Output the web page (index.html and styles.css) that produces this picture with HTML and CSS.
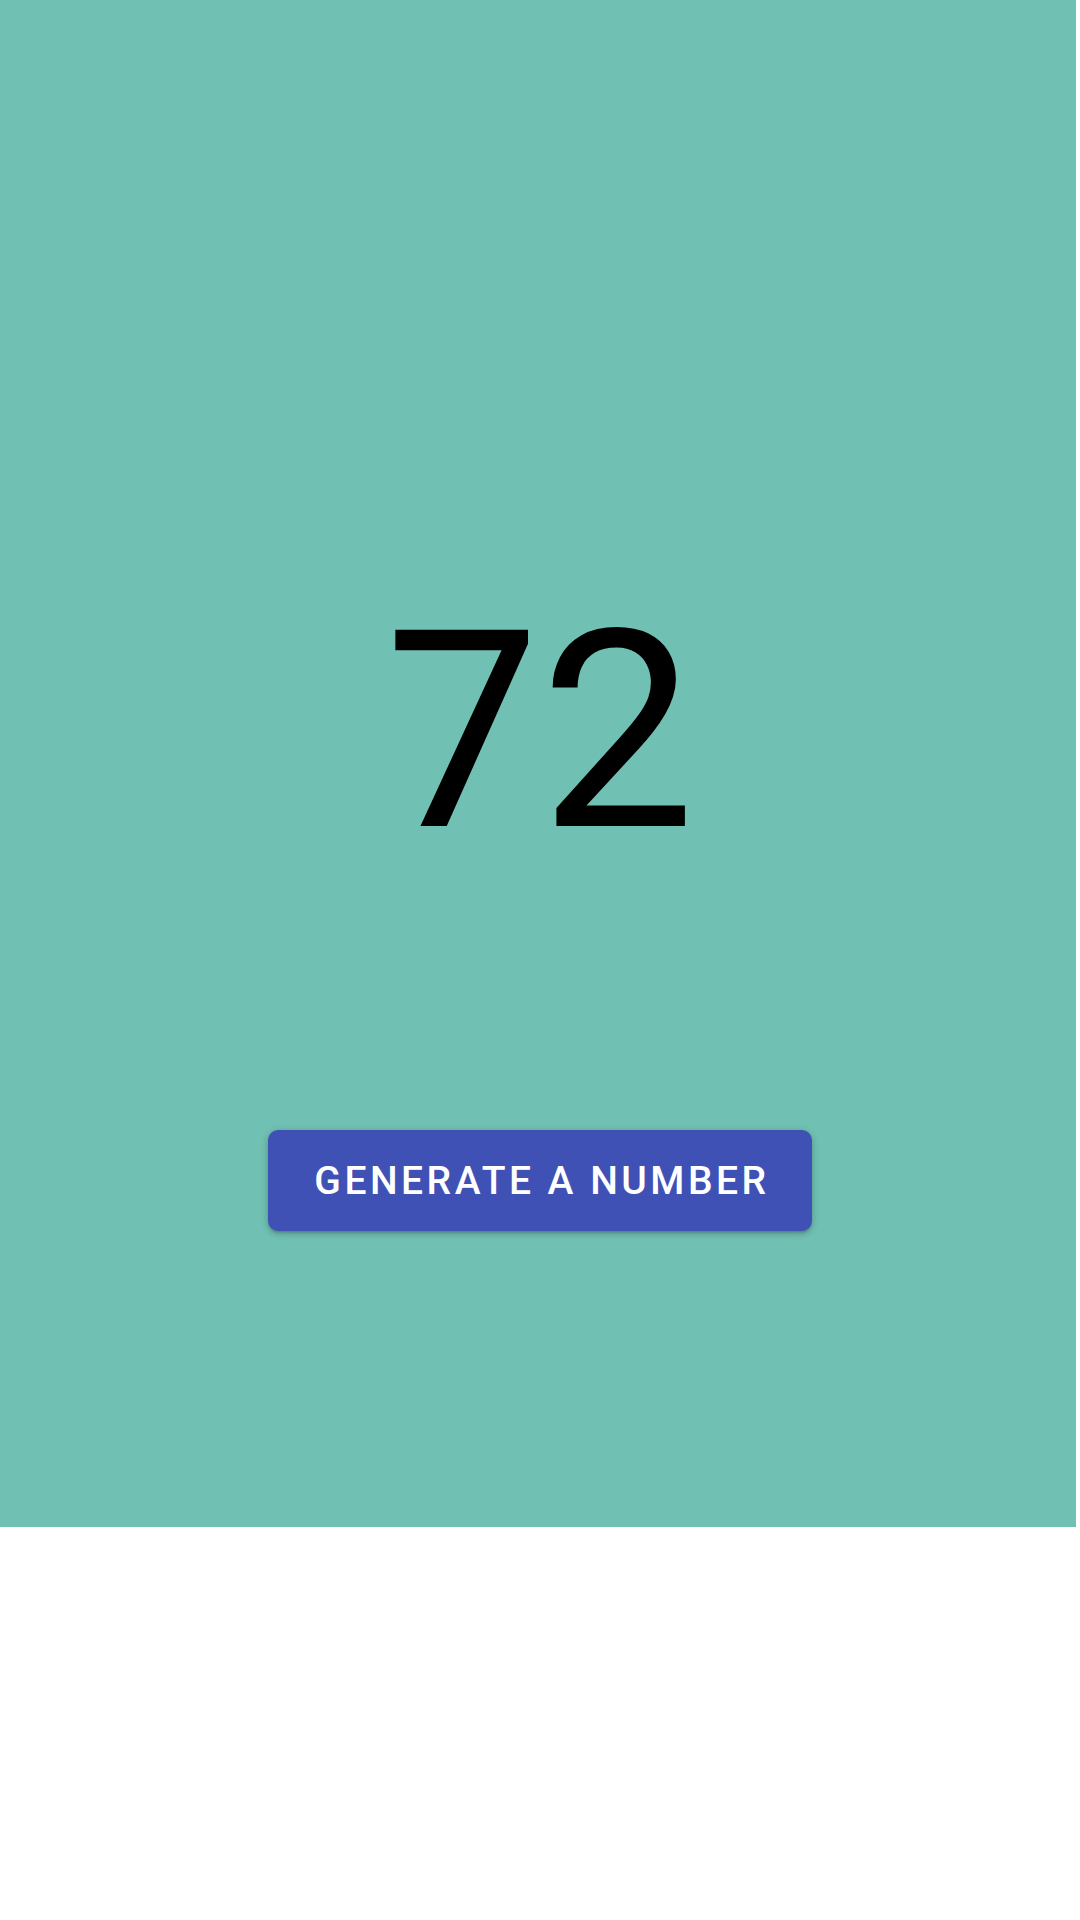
FILE: index.html
```html
<!DOCTYPE html>
<html lang="en">
<head>
    <meta charset="UTF-8">
    <meta name="viewport" content="width=device-width, initial-scale=1.0">
    <title>Random Number</title>
    <link rel="stylesheet" href="styles.css">
</head>
<body>
    <div class="screen">
        <div class="number" id="number">72</div>
        <button class="generate" onclick="generate()">Generate a number</button>
    </div>

    <script>
        // Pick a new number between 0 and 100
        function generate() {
            document.getElementById('number').textContent = Math.floor(Math.random() * 101);
        }
    </script>
</body>
</html>
```

FILE: styles.css
```css
body {
    margin: 0;
    background-color: #fff;
    font-family: Roboto, "Liberation Sans", sans-serif;
}

.screen {
    width: 1076px;
    height: 1527px;
    box-sizing: border-box;
    padding: 594px 0 0 4px;
    background-color: #70c1b3;
    display: flex;
    flex-direction: column;
    align-items: center;
}

.number {
    font-size: 276px;
    line-height: 276px;
    color: #000;
}

.generate {
    margin-top: 260px;
    width: 544px;
    height: 101px;
    padding: 0 0 0 4px;
    border: none;
    border-radius: 10px;
    background-color: #3f51b5;
    color: #fff;
    font-family: Roboto, "Liberation Sans", sans-serif;
    font-weight: 500;
    font-size: 39px;
    letter-spacing: 3.5px;
    text-align: center;
    text-transform: uppercase;
    box-shadow: 0 3px 3px -2px rgba(0, 0, 0, 0.2), 0 3px 6px 0 rgba(0, 0, 0, 0.14), 0 1px 8px 0 rgba(0, 0, 0, 0.12);
    cursor: pointer;
}
```
